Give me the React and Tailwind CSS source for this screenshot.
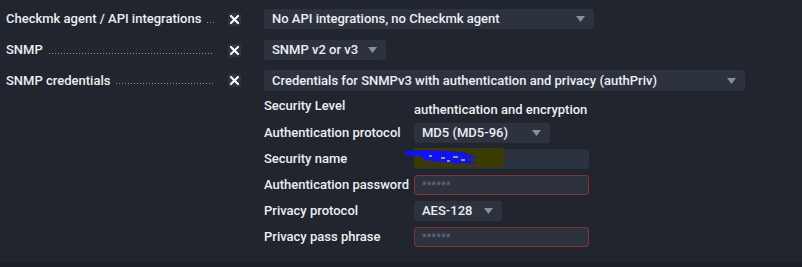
const font = { fontFamily: 'Roboto, "Liberation Sans", sans-serif' };

function Arrow() {
  return (
    <svg width="9" height="6" viewBox="0 0 9 6" className="shrink-0">
      <path d="M0 0 H9 L4.5 6 Z" fill="#8a8f99" />
    </svg>
  );
}

function Select({ children, className = '' }) {
  return (
    <div className={`flex items-center justify-between rounded-[3px] bg-[#2d333e] pl-2 pr-[9px] text-[13px] font-medium text-[#eceef1] ${className}`}>
      <span>{children}</span>
      <Arrow />
    </div>
  );
}

function Remove() {
  return (
    <div className="flex h-[13px] w-[13px] items-center justify-center rounded-[2px] bg-[#2f3540]">
      <svg width="9" height="9" viewBox="0 0 9 9">
        <path d="M1 1 L8 8 M8 1 L1 8" stroke="#ffffff" strokeWidth="2" strokeLinecap="square" />
      </svg>
    </div>
  );
}

// dotted leader drawn as a repeating background instead of a run of "." characters
function Leader({ label }) {
  return (
    <div className="flex w-[208px] items-center whitespace-nowrap text-[13px] font-medium text-[#eceef1]">
      <span className="shrink-0">{label}</span>
      <div className="ml-[6px] mt-[6px] h-px flex-1 bg-[linear-gradient(to_right,#8d929b_1px,transparent_1px)] bg-[length:3px_1px] bg-repeat-x" />
    </div>
  );
}

function TopRow({ label, children, top = '' }) {
  return (
    <div className={`flex items-center ${top}`}>
      <div className="flex w-[264px] shrink-0 items-center pl-[6px]">
        <Leader label={label} />
        <div className="ml-[14px]">
          <Remove />
        </div>
      </div>
      {children}
    </div>
  );
}

function Password() {
  return (
    <div className="flex h-[20px] w-[175px] items-center rounded-[3px] border border-[#8a2f38] bg-[#2d333e] pl-[7px] text-[10px] tracking-[0.5px] text-[#6c727c]">
      ******
    </div>
  );
}

function SubRow({ label, children, className = '' }) {
  return (
    <div className={`flex items-center ${className}`}>
      <div className="w-[150px] text-[13px] font-medium text-[#eceef1]">{label}</div>
      {children}
    </div>
  );
}

export default function App() {
  return (
    <div className="flex h-[267px] w-[802px] flex-col bg-[#21252d]" style={font}>
      <div className="flex-1 pt-[9px]">
        <TopRow label="Checkmk agent / API integrations">
          <Select className="h-[20px] w-[330px]">No API integrations, no Checkmk agent</Select>
        </TopRow>
        <TopRow label="SNMP" top="mt-[11px]">
          <Select className="h-[20px] w-[122px]">SNMP v2 or v3</Select>
        </TopRow>
        <TopRow label="SNMP credentials" top="mt-[10px]">
          <Select className="h-[21px] w-[481px]">Credentials for SNMPv3 with authentication and privacy (authPriv)</Select>
        </TopRow>

        <div className="ml-[264px] mt-[5px] flex flex-col">
          <SubRow label="Security Level" className="h-[20px]">
            <span className="mt-[8px] text-[13px] font-medium text-[#eceef1]">authentication and encryption</span>
          </SubRow>
          <SubRow label="Authentication protocol" className="mt-[7px]">
            <Select className="h-[20px] w-[136px]">MD5 (MD5-96)</Select>
          </SubRow>
          <SubRow label="Security name" className="mt-[6px]">
            <div className="relative h-[20px] w-[175px] rounded-[3px] bg-[#2d333e]">
              <svg width="110" height="24" viewBox="0 0 110 24" className="absolute -left-[11px] -top-[2px]">
                <rect x="11" y="1" width="89" height="19" fill="#3b3b00" />
                <path d="M0 4 C20 2 40 3 60 5 L74 11 C60 13 40 10 20 9 L4 8 Z" fill="#1010ff" />
                <path d="M16 8 C32 10 50 11 63 12 L74 16 C56 17 40 15 22 13 Z" fill="#1010ff" />
                <path d="M26 9 h3 M38 11 h4 M50 10 h5 M58 13 h4 M44 14 h3" stroke="#c8c840" strokeWidth="1.5" />
              </svg>
            </div>
          </SubRow>
          <SubRow label="Authentication password" className="mt-[6px]">
            <Password />
          </SubRow>
          <SubRow label="Privacy protocol" className="mt-[6px]">
            <Select className="h-[20px] w-[88px]">AES-128</Select>
          </SubRow>
          <SubRow label="Privacy pass phrase" className="mt-[6px]">
            <Password />
          </SubRow>
        </div>
      </div>
      <div className="h-[5px] bg-[#1b1e24]" />
    </div>
  );
}
